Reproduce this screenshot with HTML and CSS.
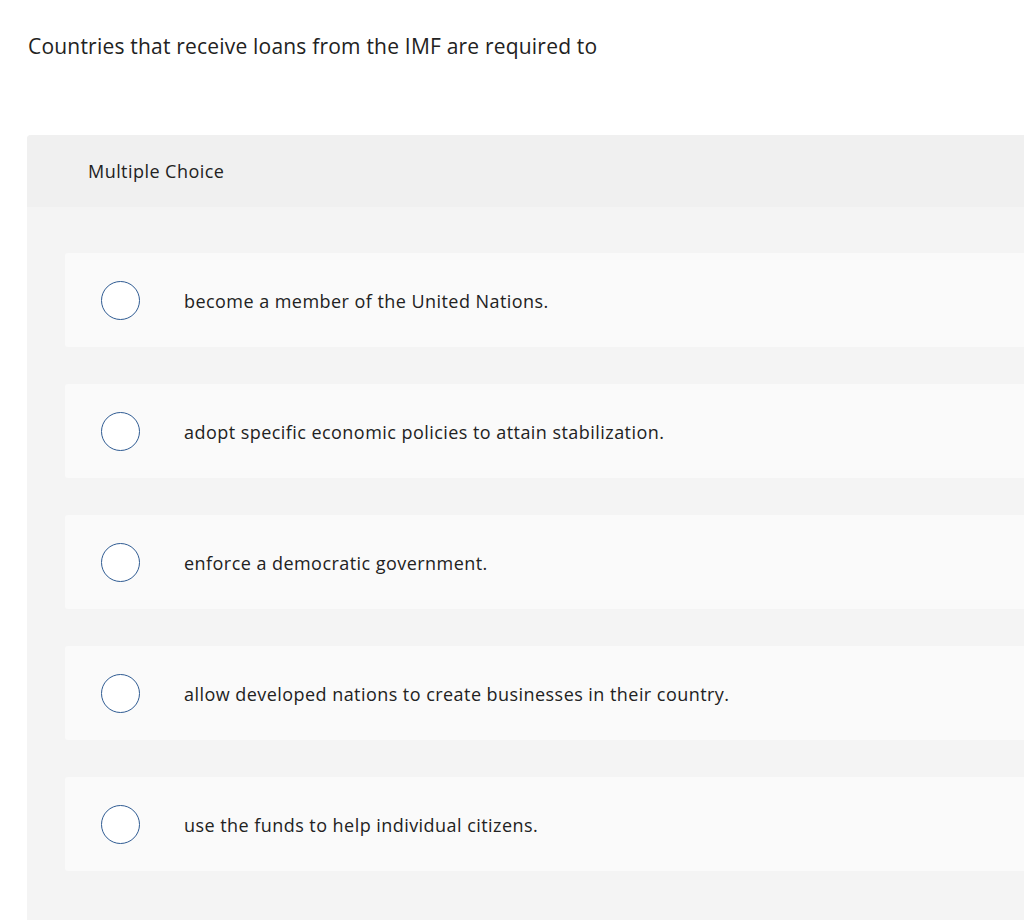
FILE: index.html
```html
<!DOCTYPE html>
<html>
<head>
<meta charset="utf-8">
<link rel="stylesheet" href="styles.css">
</head>
<body>
<div class="page">
  <p class="question">Countries that receive loans from the IMF are required to</p>
  <div class="panel">
    <div class="panel-head">Multiple Choice</div>
    <div class="panel-body">
      <div class="option"><span class="radio"></span><span class="label">become a member of the United Nations.</span></div>
      <div class="option"><span class="radio"></span><span class="label">adopt specific economic policies to attain stabilization.</span></div>
      <div class="option"><span class="radio"></span><span class="label">enforce a democratic government.</span></div>
      <div class="option"><span class="radio"></span><span class="label">allow developed nations to create businesses in their country.</span></div>
      <div class="option"><span class="radio"></span><span class="label">use the funds to help individual citizens.</span></div>
    </div>
  </div>
</div>
</body>
</html>
```
FILE: styles.css
```css
html, body {
  margin: 0;
  padding: 0;
  background: #ffffff;
  overflow: hidden;
}
body {
  font-family: "Open Sans", "Liberation Sans", sans-serif;
  color: #222222;
}
.page {
  padding: 0 0 0 27px;
  width: 1040px;
}
.question {
  margin: 0;
  padding: 31px 0 0 1px;
  height: 135px;
  box-sizing: border-box;
  font-size: 21px;
  line-height: 30px;
  letter-spacing: 0.2px;
  color: #222222;
}
.panel {
  background: #f4f4f4;
  border-radius: 4px 0 0 0;
  padding-bottom: 80px;
}
.panel-head {
  background: #f0f0f0;
  border-radius: 4px 0 0 0;
  height: 72px;
  display: flex;
  align-items: center;
  padding-left: 61px;
  font-size: 18px;
  letter-spacing: 0.45px;
}
.panel-body {
  padding: 46px 0 0 38px;
  display: flex;
  flex-direction: column;
  gap: 37px;
}
.option {
  background: #fafafa;
  border-radius: 3px 0 0 3px;
  height: 94px;
  display: flex;
  align-items: center;
  padding-left: 36px;
  padding-top: 1px;
  box-sizing: border-box;
}
.radio {
  width: 37px;
  height: 37px;
  border: 1.5px solid #305c93;
  border-radius: 50%;
  background: #ffffff;
  flex: none;
}
.label {
  margin-left: 44px;
  font-size: 18px;
  letter-spacing: 0.45px;
  color: #222222;
}
```
